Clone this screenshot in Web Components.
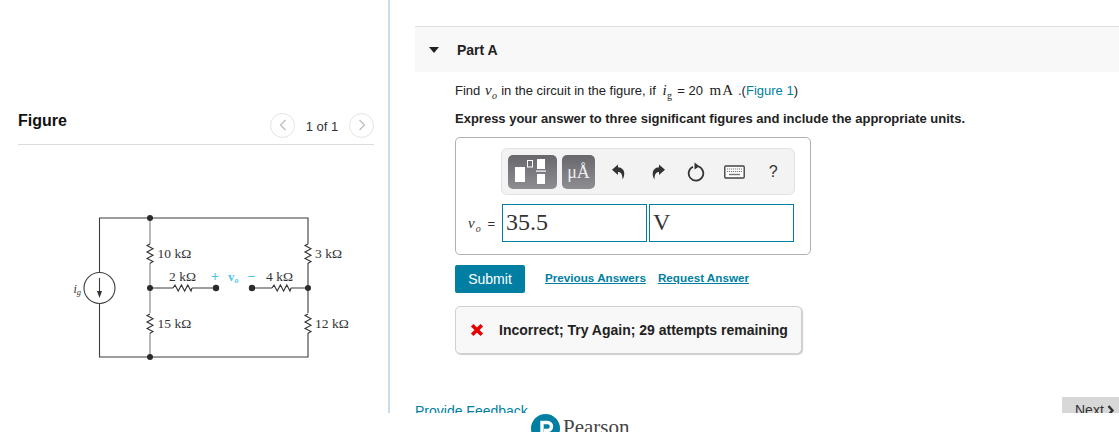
<!DOCTYPE html>
<html>
<head>
<meta charset="utf-8">
<style>
html,body{margin:0;padding:0;background:#fff;}
body{width:1119px;height:432px;overflow:hidden;font-family:"Liberation Sans",Arial,sans-serif;color:#222;}
</style>
</head>
<body>
<mp-page></mp-page>
<script>
const SANS = '"Liberation Sans",Arial,sans-serif';
const SERIF = '"Liberation Serif","Times New Roman",serif';

class CircuitFigure extends HTMLElement {
  constructor() {
    super();
    this.attachShadow({mode:'open'});
    const zig = (x, y) => `M${x} ${y}l-3 1.6l6 3.2l-6 3.2l6 3.2l-6 3.2l6 3.2l-3 1.6`;
    const zag = (x, y) => `M${x} ${y}l2 -3l3.2 6l3.2 -6l3.2 6l3.2 -6l3.2 6l1 -3`;
    this.shadowRoot.innerHTML = `
<style>
:host{display:block;width:290px;height:165px;margin:60px 0 0 42px;}
svg{display:block;}
.w{fill:none;stroke:#3c3c3c;stroke-width:1.1;}
.g{fill:none;stroke:#8a8a8a;stroke-width:1.2;}
.r{fill:none;stroke:#333;stroke-width:1.1;}
text{font-family:${SERIF};font-size:13.5px;fill:#333;}
.c{fill:#4fc3ee;font-weight:bold;}
</style>
<svg width="290" height="165" viewBox="60 205 290 165">
  <path class="w" d="M99.5 272.5V218H308V244M308 263V313M308 333V357H99.5V303.5"/>
  <path class="g" d="M150 218V244M150 263V313M150 333V357"/>
  <path class="w" d="M150 288H173M192 288H216M252 288H272M291 288H308"/>
  <path class="r" d="${zig(150,244)}"/>
  <path class="r" d="${zig(150,314)}"/>
  <path class="r" d="${zig(308,244)}"/>
  <path class="r" d="${zig(308,314)}"/>
  <path class="r" d="${zag(173,288)}"/>
  <path class="r" d="${zag(272,288)}"/>
  <circle cx="99.5" cy="288" r="15.5" fill="none" stroke="#3c3c3c" stroke-width="1.1"/>
  <path class="w" d="M99.5 278V292"/>
  <path d="M97 291h5l-2.5 7z" fill="#333"/>
  <g fill="#2b2b2b">
    <circle cx="150" cy="218" r="3"/><circle cx="150" cy="288" r="3"/><circle cx="150" cy="357" r="3"/>
    <circle cx="216" cy="288" r="3.2"/><circle cx="252" cy="288" r="3.2"/><circle cx="308" cy="288" r="3"/>
  </g>
  <text x="157.500" y="258">10 kΩ</text>
  <text x="169" y="281">2 kΩ</text>
  <text x="266" y="281">4 kΩ</text>
  <text x="315" y="258">3 kΩ</text>
  <text x="157.500" y="328">15 kΩ</text>
  <text x="315" y="328">12 kΩ</text>
  <text x="73.500" y="293" font-style="italic" style="font-size:12px">i<tspan dy="1.500" style="font-size:8.500px">g</tspan></text>
  <text class="c" x="211" y="281" style="font-size:14px">+</text>
  <text class="c" x="228" y="281" style="font-size:13px">v<tspan dy="1.500" font-style="italic" style="font-size:8px">o</tspan></text>
  <text class="c" x="247.500" y="281" style="font-size:14px">−</text>
</svg>`;
  }
}
customElements.define('circuit-figure', CircuitFigure);

class FigurePane extends HTMLElement {
  constructor() {
    super();
    this.attachShadow({mode:'open'});
    this.shadowRoot.innerHTML = `
<style>
:host{display:block;box-sizing:border-box;width:390px;height:413px;flex:none;border-right:2px solid #c9dcea;padding:110px 14px 0 18px;font-family:${SANS};}
.head{display:flex;align-items:center;justify-content:space-between;height:34px;border-bottom:1px solid #dcdcdc;}
h2{margin:0 0 12px;font-size:16px;line-height:20px;font-weight:bold;color:#111;}
.pager{display:flex;align-items:center;font-size:13px;color:#333;padding-bottom:4px;}
.pager span{width:56px;text-align:center;margin:3px -1px 0;}
.b{box-sizing:border-box;width:25px;height:25px;border:1px solid #e4e4e4;border-radius:50%;display:flex;align-items:center;justify-content:center;}
</style>
<div class="head">
  <h2>Figure</h2>
  <div class="pager">
    <div class="b"><svg width="8" height="12" viewBox="0 0 8 12"><path d="M6.500 1L1.500 6l5 5" fill="none" stroke="#bdbdbd" stroke-width="1.300"/></svg></div>
    <span>1 of 1</span>
    <div class="b"><svg width="8" height="12" viewBox="0 0 8 12"><path d="M1.500 1l5 5l-5 5" fill="none" stroke="#bdbdbd" stroke-width="1.300"/></svg></div>
  </div>
</div>
<circuit-figure></circuit-figure>`;
  }
}
customElements.define('figure-pane', FigurePane);

class MathToolbar extends HTMLElement {
  constructor() {
    super();
    this.attachShadow({mode:'open'});
    this.shadowRoot.innerHTML = `
<style>
:host{display:flex;align-items:center;box-sizing:border-box;width:294px;height:47px;margin-left:45px;padding-left:6px;background:#f3f3f3;border:1px solid #e2e2e2;border-radius:6px;}
.t{box-sizing:border-box;height:34px;border-radius:5px;background:linear-gradient(#68686c,#8e8e92);display:flex;align-items:center;justify-content:center;}
.t1{width:49px;margin-right:5px;}
.t2{width:33px;color:#eee;font:18px ${SERIF};padding-top:1px;}
.tools{display:flex;margin-left:5px;}
.i{width:38.500px;height:34px;display:flex;align-items:center;justify-content:center;color:#333;font:16px ${SANS};}
</style>
<div class="t t1">
  <svg width="37" height="26" viewBox="0 0 37 26">
    <rect x="1" y="8" width="10" height="15" fill="#fff"/>
    <rect x="13.500" y="1.500" width="5" height="6.500" fill="none" stroke="#fff"/>
    <rect x="23" y="0" width="8" height="10" fill="#fff"/>
    <rect x="22" y="11.500" width="10" height="1.200" fill="#fff"/>
    <rect x="23" y="15" width="8" height="10" fill="#fff"/>
  </svg>
</div>
<div class="t t2">μÅ</div>
<div class="tools">
  <div class="i"><svg width="14" height="16" viewBox="0 0 14 16"><path d="M6 .5L0 5.800l6 5.200V8c3 0 4.500 2 4.500 7.500C13 12 14 3.800 6 3.300z" fill="#333"/></svg></div>
  <div class="i"><svg width="14" height="16" viewBox="0 0 14 16"><path d="M8 .5l6 5.300l-6 5.200V8c-3 0-4.500 2-4.500 7.500C1 12 0 3.800 8 3.300z" fill="#333"/></svg></div>
  <div class="i"><svg width="18" height="20" viewBox="0 0 18 20"><path d="M6 4.700A7.300 7.300 0 1 0 11.500 4.500" fill="none" stroke="#333" stroke-width="1.800"/><path d="M7.500 .5L12.500 4.200L7.500 7.500z" fill="#333"/></svg></div>
  <div class="i"><svg width="21" height="14" viewBox="0 0 21 14"><rect x=".8" y="1" width="19.400" height="12" rx="1" fill="#fff" stroke="#444" stroke-width="1.400"/><path d="M3 4h15M3 6.500h15" stroke="#777" stroke-width="1.200" stroke-dasharray="1.200 .8"/><path d="M5 9.500h11" stroke="#777" stroke-width="1.400"/></svg></div>
  <div class="i">?</div>
</div>`;
  }
}
customElements.define('math-toolbar', MathToolbar);

class AnswerBox extends HTMLElement {
  constructor() {
    super();
    this.attachShadow({mode:'open'});
    this.shadowRoot.innerHTML = `
<style>
:host{display:block;box-sizing:border-box;width:356px;height:118px;margin-top:9px;padding:10px 0 0 0;border:1px solid #b0b0b0;border-radius:5px;}
.row{display:flex;align-items:center;margin-top:9px;}
.lab{width:46px;box-sizing:border-box;text-align:right;padding-right:7px;font:italic 15px ${SERIF};letter-spacing:1px;color:#333;white-space:nowrap;}
.lab sub{font-size:10px;line-height:0;}
.lab b{font:13px ${SANS};letter-spacing:0;margin-left:2px;}
.f{box-sizing:border-box;width:145px;height:38px;border:1px solid #007fa3;font:24px/34px ${SERIF};color:#333;padding-left:3px;}
.f + .f{margin-left:2px;}
</style>
<math-toolbar></math-toolbar>
<div class="row">
  <div class="lab">v<sub>o</sub><b> =</b></div>
  <div class="f">35.5</div>
  <div class="f">V</div>
</div>`;
  }
}
customElements.define('answer-box', AnswerBox);

class FeedbackBox extends HTMLElement {
  constructor() {
    super();
    this.attachShadow({mode:'open'});
    this.shadowRoot.innerHTML = `
<style>
:host{display:flex;align-items:center;box-sizing:border-box;width:347px;height:48px;margin-top:13px;padding-left:14px;background:#f8f8f8;border:1px solid #d0d0d0;border-radius:5px;box-shadow:1px 1px 1px #ccc;font:bold 14px ${SANS};color:#222;}
svg{margin-right:15px;flex:none;}
</style>
<svg width="14" height="14" viewBox="0 0 14 14"><path d="M2.200 2.200L11.800 11.800M11.800 2.200L2.200 11.800" stroke="#e60000" stroke-width="3.600"/></svg>
<slot></slot>`;
  }
}
customElements.define('feedback-box', FeedbackBox);

class PartPanel extends HTMLElement {
  constructor() {
    super();
    this.attachShadow({mode:'open'});
    this.shadowRoot.innerHTML = `
<style>
:host{display:block;font-family:${SANS};color:#222;}
.head{display:flex;align-items:center;height:45px;background:#f8f8f8;border-top:1px solid #e0e0e0;font:bold 14px ${SANS};}
.tri{width:0;height:0;margin:0 18px 0 14px;border:5.500px solid transparent;border-top:6px solid #222;border-bottom:0;}
.body{padding-left:40px;}
p{margin:0;font-size:13px;line-height:18px;height:18px;white-space:nowrap;}
.q{margin-top:10px;}
.m{font-family:${SERIF};font-style:italic;font-size:15px;line-height:0;letter-spacing:.5px;margin:0 0 0 1px;}
.i{margin:0 1px 0 3px;}
.u{font-family:${SERIF};font-size:15px;line-height:0;letter-spacing:1px;margin:0 4px 0 3px;}
sub{font-size:10px;line-height:0;}
a{color:#007fa3;text-decoration:none;}
.ins{margin-top:10px;font-weight:bold;}
.act{display:flex;align-items:center;margin-top:10px;}
.sub{box-sizing:border-box;width:70px;height:28px;background:#007fa3;color:#fff;border-radius:2px;font-size:14px;line-height:28px;text-align:center;margin-right:20px;}
.act a{font-weight:bold;font-size:11.700px;text-decoration:underline;margin-right:12px;margin-top:-3px;}
</style>
<div class="head"><span class="tri"></span>Part A</div>
<div class="body">
  <p class="q">Find <span class="m">v<sub>o</sub></span> in the circuit in the figure, if <span class="m i">i<sub style="font-style:normal">g</sub></span> = 20 <span class="u">mA</span>.(<a href="#">Figure 1</a>)</p>
  <p class="ins">Express your answer to three significant figures and include the appropriate units.</p>
  <answer-box></answer-box>
  <div class="act"><div class="sub">Submit</div><a href="#">Previous Answers</a><a href="#">Request Answer</a></div>
  <feedback-box>Incorrect; Try Again; 29 attempts remaining</feedback-box>
</div>`;
  }
}
customElements.define('part-panel', PartPanel);

class PageFooter extends HTMLElement {
  constructor() {
    super();
    this.attachShadow({mode:'open'});
    this.shadowRoot.innerHTML = `
<style>
:host{display:flex;justify-content:flex-start;box-sizing:border-box;height:19px;overflow:hidden;padding:1px 0 0 531px;}
.w{display:flex;align-items:flex-start;}
svg{flex:none;margin-right:3px;}
span{font:21px/24px ${SERIF};color:#444;margin-top:1px;}
</style>
<div class="w">
  <svg width="29" height="29" viewBox="0 0 29 29"><circle cx="14.500" cy="14.500" r="14.500" fill="#007fa3"/><path d="M11 21V8.500h5.500a4 4 0 0 1 0 8H13" fill="none" stroke="#fff" stroke-width="3.400"/></svg>
  <span>Pearson</span>
</div>`;
  }
}
customElements.define('page-footer', PageFooter);

class MpPage extends HTMLElement {
  constructor() {
    super();
    this.attachShadow({mode:'open'});
    this.shadowRoot.innerHTML = `
<style>
:host{display:block;width:1119px;height:432px;overflow:hidden;font-family:${SANS};}
.main{display:flex;height:413px;overflow:hidden;}
.right{flex:1;padding:26px 0 0 25px;min-width:0;}
.bot{display:flex;justify-content:space-between;align-items:flex-start;height:60px;margin-top:43px;}
.bot a{color:#007fa3;font-size:14px;line-height:16px;text-decoration:none;margin-top:6px;}
.next{box-sizing:border-box;width:57px;height:30px;background:#d8d8d8;font-size:14px;line-height:16px;color:#333;padding:5px 0 0 13px;white-space:nowrap;display:flex;}
.next svg{margin:3px 0 0 3px;}
</style>
<div class="main">
  <figure-pane></figure-pane>
  <div class="right">
    <part-panel></part-panel>
    <div class="bot"><a href="#">Provide Feedback</a><div class="next">Next<svg width="8" height="11" viewBox="0 0 8 11"><path d="M1.500 1l4 4.500l-4 4.500" fill="none" stroke="#333" stroke-width="2.400"/></svg></div></div>
  </div>
</div>
<page-footer></page-footer>`;
  }
}
customElements.define('mp-page', MpPage);
</script>
</body>
</html>
